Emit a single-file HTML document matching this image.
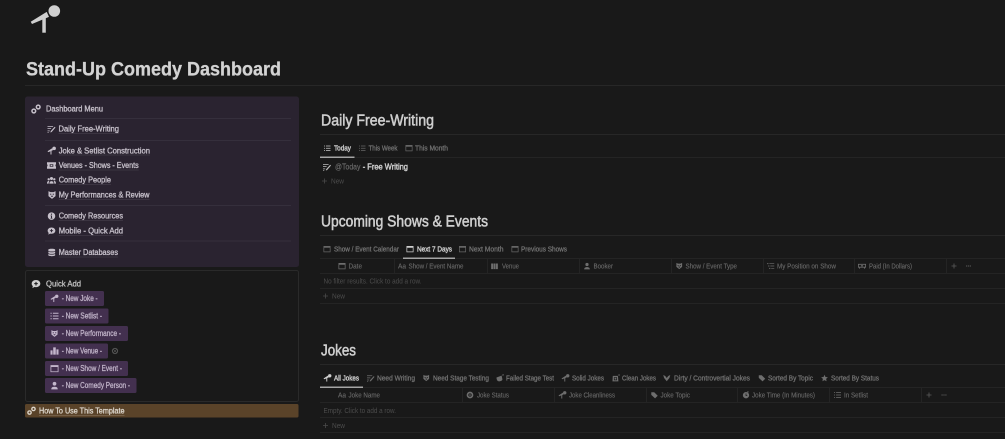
<!DOCTYPE html>
<html lang="en">
<head>
<meta charset="utf-8">
<title>Stand-Up Comedy Dashboard</title>
<style>
html,body{margin:0;padding:0;background:#191919;width:1005px;height:439px;overflow:hidden}
svg{display:block;filter:blur(.35px)}
text{font-family:"Liberation Sans",sans-serif;font-size:7.4px}
.m{fill:#c6c0ca;stroke:#c6c0ca;stroke-width:.32px;font-size:8px}
.b{fill:#c3b6cb;stroke:#c3b6cb;stroke-width:.26px;font-size:7.8px}
.h{fill:#cfcfcf;stroke:#cfcfcf;stroke-width:.5px;font-size:15.5px}
.t{fill:#747474;stroke:#747474;stroke-width:.26px;font-size:7.7px}
.a{fill:#cdcdcd;stroke:#cdcdcd;stroke-width:.38px;font-size:7.7px}
.c{fill:#6c6c6c;stroke:#6c6c6c;stroke-width:.1px;font-size:7.7px}
.f{fill:#4c4c4c;font-size:7.6px}
.l{stroke:#272727;stroke-width:1}
.s{stroke:#242424;stroke-width:1}
.u{stroke:#4c4653;stroke-width:.6}
</style>
</head>
<body>
<svg width="1005" height="439" viewBox="0 0 1005 439" xmlns="http://www.w3.org/2000/svg">
<defs>
<symbol id="mic" viewBox="0 0 10 10"><circle cx="7.8" cy="2.2" r="2.1"/><path d="M0 5.600 5.500 2 6.600 4.200 1 6.600z"/><rect x="3.500" y="4.400" width="1.200" height="5"/></symbol>
<symbol id="list" viewBox="0 0 10 10"><path d="M0 1h1.500v1.200H0zM3 1h7v1.200H3zM0 4.400h1.500v1.200H0zM3 4.400h7v1.200H3zM0 7.800h1.500V9H0zM3 7.800h7V9H3z"/></symbol>
<symbol id="cal" viewBox="0 0 10 10"><path fill-rule="evenodd" d="M0 .8h10v8.800H0zM1 3.200v5.400h8V3.200z"/></symbol>
<symbol id="gear" viewBox="0 0 10 10"><path fill-rule="evenodd" d="M2.800 4.400a2.600 2.600 0 1 1 0 5.200 2.600 2.600 0 0 1 0-5.200zm0 1.500a1.100 1.100 0 1 0 0 2.200 1.100 1.100 0 0 0 0-2.200zM7.200.4a2.600 2.600 0 1 1 0 5.200 2.600 2.600 0 0 1 0-5.200zm0 1.500a1.100 1.100 0 1 0 0 2.200 1.100 1.100 0 0 0 0-2.200z"/></symbol>
<symbol id="note" viewBox="0 0 10 10"><path d="M0 1.200h7v1H0zM0 4h4.500v1H0zM0 6.800h2.800v1H0zM0 8.800h1.600v.8H0zM9 2.200 10 3.200 5.200 8.800 3.600 9.400 4 7.600z"/></symbol>
<symbol id="mask" viewBox="0 0 10 10"><path fill-rule="evenodd" d="M.6.200 3 1.400h4L9.400.2v6.200L5 9.800.6 6.400zM2.400 3.400v1.200h1.800V3.400zM5.800 3.400v1.200h1.800V3.400zM3.200 6h3.600L5 7.800z"/></symbol>
<symbol id="people" viewBox="0 0 10 10"><circle cx="5" cy="3.400" r="1.700"/><circle cx="1.900" cy="4.200" r="1.300"/><circle cx="8.100" cy="4.200" r="1.300"/><path d="M2.600 9c0-3.600 4.800-3.600 4.800 0zM0 9c0-3 2-3.200 2.600-2.600-.5.600-.7 1.600-.7 2.600zM10 9c0-3-2-3.200-2.600-2.600.5.600.7 1.600.7 2.600z"/></symbol>
<symbol id="person" viewBox="0 0 10 10"><circle cx="5" cy="2.800" r="2.300"/><path d="M1 9.800c0-1.400.4-3.200 4-3.200s4 1.800 4 3.200z"/></symbol>
<symbol id="ticket" viewBox="0 0 10 10"><path fill-rule="evenodd" d="M0 1.400h10v2.200c-.8.300-.8 2.300 0 2.600v2.400H0V6.200c.8-.3.800-2.300 0-2.600zM3 3.600v2.800h4V3.600z"/><rect x="4" y="4.300" width="2" height="1.400"/></symbol>
<symbol id="info" viewBox="0 0 10 10"><path fill-rule="evenodd" d="M5 .4a4.700 4.700 0 1 1 0 9.400A4.700 4.700 0 0 1 5 .4zM4.300 2v1.500h1.400V2zM3.900 4.300v1h.5v2h-.5v1h2.200v-1h-.5v-3z"/></symbol>
<symbol id="chat" viewBox="0 0 10 10"><path fill-rule="evenodd" d="M5 .6c2.800 0 4.800 1.800 4.800 4S7.800 8.500 5 8.500c-.6 0-1.200-.1-1.700-.2L1 9.600l.5-2.300C.6 6.600.2 5.700.2 4.600.2 2.400 2.200.6 5 .6zM4.400 2.600v1.400H3v1.200h1.400v1.400h1.200V5.200H7V4H5.600V2.600z"/></symbol>
<symbol id="db" viewBox="0 0 10 10"><path d="M1 1.600C1 .2 9 .2 9 1.600v1.300C9 4.200 1 4.200 1 2.900zM1 4c1.500 1 6.500 1 8 0v1.600C9 7 1 7 1 5.600zM1 6.700c1.500 1 6.500 1 8 0v1.600c0 1.400-8 1.400-8 0z"/></symbol>
<symbol id="venue" viewBox="0 0 10 10"><path d="M.2 1.500h2.800v8H.2zM3.600 1.500h2.800v8H3.600zM7 1.500h2.800v8H7z"/></symbol>
<symbol id="building" viewBox="0 0 10 10"><path d="M0 4.200h2.600V9.600H0zM3.400.4h3.200v9.200H3.400zM7.400 3h2.600v6.600H7.400z"/></symbol>
<symbol id="tag" viewBox="0 0 10 10"><path d="M.4 1h4.200l5 5-3.800 3.800-5.400-5z"/></symbol>
<symbol id="star" viewBox="0 0 10 10"><path d="M5 .4 6.400 3.600 9.800 4 7.300 6.300 8 9.700 5 8 2 9.700 2.700 6.300.2 4 3.600 3.600z"/></symbol>
<symbol id="heart" viewBox="0 0 10 10"><path d="M.3 1 3 2.400 5 5l2-2.600L9.700 1 8.500 5 5 9.400 1.500 5z"/></symbol>
<symbol id="mug" viewBox="0 0 10 10"><path d="M.6 4.400 7 2l1 4.600c0 1.600-2 2.600-4 2.600S.8 7.800.6 4.400zM7.800 .8l1.600-.6.400 1.400-1.600.6z"/></symbol>
<symbol id="clean" viewBox="0 0 10 10"><path fill-rule="evenodd" d="M1 2.400h6.400l.6 6.800H.6zM2.400 4v3.800h3.800V4z"/><circle cx="8.800" cy="1.300" r=".9"/><circle cx="4.300" cy="5.900" r="1.200"/></symbol>
<symbol id="clock" viewBox="0 0 10 10"><path fill-rule="evenodd" d="M5 .8a4.500 4.500 0 1 1 0 9 4.500 4.500 0 0 1 0-9zM4.500 2.800v3.400h2.300v-1H5.500V2.800zM6.500 0h2.400v1.200H6.500z"/></symbol>
<symbol id="status" viewBox="0 0 10 10"><path fill-rule="evenodd" d="M5 .2a4.800 4.800 0 1 1 0 9.600A4.800 4.800 0 0 1 5 .2zm0 2.400a2.400 2.400 0 1 0 0 4.800 2.400 2.400 0 0 0 0-4.800z"/><circle cx="5" cy="5" r="1.100"/></symbol>
<symbol id="money" viewBox="0 0 10 10"><path fill-rule="evenodd" d="M0 2.400h10V7H8.600v1.400h-1V7h-5.200v1.400h-1V7H0zM1 3.400v2.600h8V3.400zM3.800 4h2.400v1.400H3.800z"/></symbol>
<symbol id="pos" viewBox="0 0 10 10"><path d="M0 .8h1.600v1.600H0zM3 1h7v1H3zM1.400 4.200H3v1.600H1.400zM4.400 4.500H10v1H4.400zM2.800 7.600h1.600v1.600H2.800zM5.600 8H10v1H5.600z"/></symbol>
</defs>

<rect width="1005" height="439" fill="#191919"/>

<!-- page header -->
<g fill="#cfcfcf"><circle cx="54.300" cy="11" r="5.800"/><path d="M30.700 21.700 46.700 11.900 49 16.900 32 24z"/><rect x="42.300" y="18" width="3.500" height="14.700"/></g>
<text x="26" y="75.500" style="font-size:19.500px;font-weight:bold;fill:#d3d3d3;stroke:#d3d3d3;stroke-width:.3px" textLength="255" lengthAdjust="spacingAndGlyphs">Stand-Up Comedy Dashboard</text>
<line class="l" x1="25" y1="85.500" x2="1005" y2="85.500"/>

<!-- menu panel -->
<rect x="25" y="96.500" width="274" height="170.500" rx="2.500" fill="#2a2330"/>
<g stroke="#3a3440" stroke-width=".8"><line x1="45" y1="118.500" x2="291" y2="118.500"/><line x1="45" y1="140.500" x2="291" y2="140.500"/><line x1="45" y1="205.500" x2="291" y2="205.500"/><line x1="45" y1="241" x2="291" y2="241"/></g>
<g fill="#c6c0ca">
<use href="#gear" x="31" y="104" width="10" height="10"/>
<use href="#note" x="47" y="125" width="9" height="8"/>
<use href="#mic" x="47.500" y="146.500" width="8.500" height="8.500"/>
<use href="#ticket" x="47" y="161" width="9" height="9"/>
<use href="#people" x="46.500" y="175.500" width="10" height="9"/>
<use href="#mask" x="48" y="190.500" width="8" height="9"/>
<use href="#info" x="47.500" y="212" width="8" height="8"/>
<use href="#chat" x="47.500" y="227" width="8" height="8"/>
<use href="#db" x="47.500" y="248" width="8.500" height="9"/>
</g>
<text class="m" x="46" y="111.700" textLength="57" lengthAdjust="spacingAndGlyphs">Dashboard Menu</text>
<text class="m" x="58.500" y="131.700" textLength="60.500" lengthAdjust="spacingAndGlyphs">Daily Free-Writing</text>
<text class="m" x="58.700" y="153.300" textLength="91.300" lengthAdjust="spacingAndGlyphs">Joke &amp; Setlist Construction</text>
<text class="m" x="58.700" y="168" textLength="80" lengthAdjust="spacingAndGlyphs">Venues - Shows - Events</text>
<text class="m" x="58.700" y="182.700" textLength="52.300" lengthAdjust="spacingAndGlyphs">Comedy People</text>
<text class="m" x="58.700" y="197.500" textLength="90.800" lengthAdjust="spacingAndGlyphs">My Performances &amp; Review</text>
<text class="m" x="58.700" y="218.700" textLength="64.300" lengthAdjust="spacingAndGlyphs">Comedy Resources</text>
<text class="m" x="58.700" y="233.500" textLength="64.300" lengthAdjust="spacingAndGlyphs">Mobile - Quick Add</text>
<text class="m" x="58.700" y="255" textLength="59.300" lengthAdjust="spacingAndGlyphs">Master Databases</text>
<g class="u">
<line x1="58.500" y1="133.500" x2="119" y2="133.500"/><line x1="58.700" y1="155" x2="150" y2="155"/><line x1="58.700" y1="170" x2="138.700" y2="170"/><line x1="58.700" y1="184.500" x2="111" y2="184.500"/><line x1="58.700" y1="199.500" x2="149.500" y2="199.500"/><line x1="58.700" y1="220.500" x2="123" y2="220.500"/><line x1="58.700" y1="235.500" x2="123" y2="235.500"/><line x1="58.700" y1="257" x2="118" y2="257"/>
</g>

<!-- quick add -->
<rect x="25.500" y="270.500" width="273" height="131" rx="2" fill="#191919" stroke="#2a2a2a"/>
<use href="#chat" x="31.500" y="279.500" width="9" height="9" fill="#cfcfcf"/>
<text class="m" x="46" y="286.500" textLength="35" lengthAdjust="spacingAndGlyphs" style="fill:#bdbdbd;stroke:#bdbdbd">Quick Add</text>
<g fill="#43304f">
<rect x="45" y="291" width="59" height="15" rx="1.500"/>
<rect x="45" y="308.500" width="63.500" height="15" rx="1.500"/>
<rect x="45" y="326" width="83" height="15" rx="1.500"/>
<rect x="45" y="343.500" width="63" height="15" rx="1.500"/>
<rect x="45" y="361" width="83" height="15" rx="1.500"/>
<rect x="45" y="378" width="91.500" height="15" rx="1.500"/>
</g>
<g fill="#c3b6cb">
<use href="#mic" x="50.500" y="294.500" width="8" height="8"/>
<use href="#list" x="50.500" y="312" width="8" height="8"/>
<use href="#mask" x="51" y="329" width="7" height="9"/>
<use href="#building" x="50.500" y="347" width="8" height="8"/>
<use href="#cal" x="50.500" y="364.500" width="8" height="8"/>
<use href="#person" x="50.500" y="381.500" width="8" height="8"/>
</g>
<text class="b" x="61.700" y="301" textLength="36" lengthAdjust="spacingAndGlyphs">- New Joke -</text>
<text class="b" x="61.700" y="318.500" textLength="40.300" lengthAdjust="spacingAndGlyphs">- New Setlist -</text>
<text class="b" x="61.700" y="336" textLength="59.300" lengthAdjust="spacingAndGlyphs">- New Performance -</text>
<text class="b" x="61.700" y="353.500" textLength="40.300" lengthAdjust="spacingAndGlyphs">- New Venue -</text>
<text class="b" x="61.700" y="371" textLength="60.300" lengthAdjust="spacingAndGlyphs">- New Show / Event -</text>
<text class="b" x="61.700" y="388" textLength="68.300" lengthAdjust="spacingAndGlyphs">- New Comedy Person -</text>
<circle cx="115" cy="351" r="2.600" fill="none" stroke="#555" stroke-width="1"/>
<path d="M113.500 349.500 116.500 352.500M116.500 349.500 113.500 352.500" stroke="#555" stroke-width=".7"/>

<rect x="25" y="404" width="273.500" height="13.500" rx="1.500" fill="#5a4329"/>
<use href="#gear" x="27" y="406" width="9" height="9.500" fill="#ddd6cc"/>
<text class="m" x="39" y="413.500" textLength="85.500" lengthAdjust="spacingAndGlyphs" style="fill:#dcd6cc;stroke:#dcd6cc">How To Use This Template</text>
<line x1="39" y1="415.500" x2="124.500" y2="415.500" stroke="#8d7c66" stroke-width=".5"/>

<!-- Daily Free-Writing -->
<text class="h" x="321" y="125.300" textLength="113" lengthAdjust="spacingAndGlyphs">Daily Free-Writing</text>
<line class="l" x1="320" y1="134.500" x2="1005" y2="134.500"/>
<line class="s" x1="320" y1="157.500" x2="1005" y2="157.500"/>
<rect x="320" y="156.500" width="34.500" height="1.500" fill="#a5a5a5"/>
<use href="#list" x="324" y="145" width="6.500" height="6.500" fill="#c9c9c9"/>
<use href="#list" x="359" y="145" width="6.500" height="6.500" fill="#666"/>
<use href="#cal" x="405.500" y="144.500" width="7" height="7" fill="#666"/>
<text class="a" x="334" y="150.500" textLength="17" lengthAdjust="spacingAndGlyphs">Today</text>
<text class="t" x="368.500" y="150.500" textLength="29" lengthAdjust="spacingAndGlyphs">This Week</text>
<text class="t" x="415" y="150.500" textLength="33" lengthAdjust="spacingAndGlyphs">This Month</text>
<use href="#note" x="322.500" y="163" width="9" height="8" fill="#bdbdbd"/>
<text x="335" y="169.500" textLength="25.500" lengthAdjust="spacingAndGlyphs" style="fill:#6a6a6a;font-size:7.800px;stroke:#6a6a6a;stroke-width:.15px">@Today</text>
<text x="362.700" y="169.500" textLength="45.300" lengthAdjust="spacingAndGlyphs" style="fill:#cfcfcf;font-size:7.800px;stroke:#cfcfcf;stroke-width:.4px">- Free Writing</text>
<path d="M322 181h5M324.500 178.500v5" stroke="#4a4a4a" stroke-width=".8"/>
<text class="f" x="331" y="183.500" textLength="13" lengthAdjust="spacingAndGlyphs">New</text>

<!-- Upcoming -->
<text class="h" x="321" y="226.300" textLength="167" lengthAdjust="spacingAndGlyphs">Upcoming Shows &amp; Events</text>
<line class="l" x1="320" y1="235.500" x2="1005" y2="235.500"/>
<g fill="#666">
<use href="#cal" x="323.500" y="245.500" width="7" height="7"/>
<use href="#cal" x="459" y="245.500" width="7" height="7"/>
<use href="#cal" x="511.500" y="245.500" width="7" height="7"/>
</g>
<use href="#cal" x="406.500" y="245.500" width="7" height="7" fill="#cfcfcf"/>
<text class="t" x="334" y="251.500" textLength="65" lengthAdjust="spacingAndGlyphs">Show / Event Calendar</text>
<text class="a" x="417" y="251.500" textLength="35" lengthAdjust="spacingAndGlyphs">Next 7 Days</text>
<text class="t" x="469" y="251.500" textLength="34.500" lengthAdjust="spacingAndGlyphs">Next Month</text>
<text class="t" x="521" y="251.500" textLength="46" lengthAdjust="spacingAndGlyphs">Previous Shows</text>
<g class="s"><line x1="320" y1="258.500" x2="1005" y2="258.500"/><line x1="320" y1="273.500" x2="1005" y2="273.500"/><line x1="320" y1="288.500" x2="1005" y2="288.500"/><line x1="320" y1="303.500" x2="1005" y2="303.500"/>
<line x1="394.500" y1="258.500" x2="394.500" y2="273.500"/><line x1="487.500" y1="258.500" x2="487.500" y2="273.500"/><line x1="579.500" y1="258.500" x2="579.500" y2="273.500"/><line x1="671.500" y1="258.500" x2="671.500" y2="273.500"/><line x1="763.500" y1="258.500" x2="763.500" y2="273.500"/><line x1="854.500" y1="258.500" x2="854.500" y2="273.500"/><line x1="946.500" y1="258.500" x2="946.500" y2="273.500"/></g>
<rect x="403" y="257.500" width="52" height="1.500" fill="#a5a5a5"/>
<g fill="#6e6e6e">
<use href="#cal" x="338.500" y="262.500" width="7" height="7"/>
<use href="#venue" x="491" y="262.500" width="7" height="7"/>
<use href="#person" x="583.500" y="262.500" width="7" height="7"/>
<use href="#mask" x="676" y="262" width="6.500" height="8"/>
<use href="#pos" x="767" y="262.500" width="7.500" height="7"/>
<use href="#money" x="858" y="262" width="8" height="8"/>
</g>
<text class="c" x="398" y="268.500" textLength="8" lengthAdjust="spacingAndGlyphs">Aa</text>
<text class="c" x="348.500" y="268.500" textLength="13.500" lengthAdjust="spacingAndGlyphs">Date</text>
<text class="c" x="408.500" y="268.500" textLength="55" lengthAdjust="spacingAndGlyphs">Show / Event Name</text>
<text class="c" x="502" y="268.500" textLength="17" lengthAdjust="spacingAndGlyphs">Venue</text>
<text class="c" x="593.500" y="268.500" textLength="19.500" lengthAdjust="spacingAndGlyphs">Booker</text>
<text class="c" x="685.500" y="268.500" textLength="51.500" lengthAdjust="spacingAndGlyphs">Show / Event Type</text>
<text class="c" x="777" y="268.500" textLength="59" lengthAdjust="spacingAndGlyphs">My Position on Show</text>
<text class="c" x="869" y="268.500" textLength="43" lengthAdjust="spacingAndGlyphs">Paid (In Dollars)</text>
<path d="M951.500 266h5M954 263.500v5" stroke="#5c5c5c" stroke-width=".8"/>
<path d="M966 266h5" stroke="#5c5c5c" stroke-width="1" stroke-dasharray="1.200 .7"/>
<text class="f" x="323.500" y="283.500" textLength="98" lengthAdjust="spacingAndGlyphs">No filter results. Click to add a row.</text>
<path d="M323 296h5M325.500 293.500v5" stroke="#4a4a4a" stroke-width=".8"/>
<text class="f" x="332" y="298.500" textLength="13" lengthAdjust="spacingAndGlyphs">New</text>

<!-- Jokes -->
<text class="h" x="321" y="355.300" textLength="35" lengthAdjust="spacingAndGlyphs">Jokes</text>
<line class="l" x1="320" y1="364.500" x2="1005" y2="364.500"/>
<use href="#mic" x="323.500" y="374" width="8" height="8" fill="#cfcfcf"/>
<g fill="#6e6e6e">
<use href="#note" x="366.500" y="374.500" width="8.500" height="7.500"/>
<use href="#mask" x="423" y="374" width="6.500" height="8"/>
<use href="#mug" x="496" y="374" width="8" height="8"/>
<use href="#mic" x="561.500" y="374" width="8" height="8"/>
<use href="#clean" x="612" y="374" width="8" height="8"/>
<use href="#heart" x="663" y="374" width="7.500" height="8"/>
<use href="#tag" x="758.500" y="374.500" width="7" height="7"/>
<use href="#star" x="821" y="374.500" width="7" height="7"/>
</g>
<text class="a" x="334" y="380.500" textLength="25" lengthAdjust="spacingAndGlyphs">All Jokes</text>
<text class="t" x="377" y="380.500" textLength="38" lengthAdjust="spacingAndGlyphs">Need Writing</text>
<text class="t" x="433" y="380.500" textLength="56" lengthAdjust="spacingAndGlyphs">Need Stage Testing</text>
<text class="t" x="506" y="380.500" textLength="48" lengthAdjust="spacingAndGlyphs">Failed Stage Test</text>
<text class="t" x="572" y="380.500" textLength="32" lengthAdjust="spacingAndGlyphs">Solid Jokes</text>
<text class="t" x="622" y="380.500" textLength="34" lengthAdjust="spacingAndGlyphs">Clean Jokes</text>
<text class="t" x="674" y="380.500" textLength="76" lengthAdjust="spacingAndGlyphs">Dirty / Controvertial Jokes</text>
<text class="t" x="768" y="380.500" textLength="45" lengthAdjust="spacingAndGlyphs">Sorted By Topic</text>
<text class="t" x="831" y="380.500" textLength="48" lengthAdjust="spacingAndGlyphs">Sorted By Status</text>
<g class="s"><line x1="320" y1="387.500" x2="1005" y2="387.500"/><line x1="320" y1="402.500" x2="1005" y2="402.500"/><line x1="320" y1="417.500" x2="1005" y2="417.500"/><line x1="320" y1="432.500" x2="1005" y2="432.500"/>
<line x1="462.500" y1="387.500" x2="462.500" y2="402.500"/><line x1="554.500" y1="387.500" x2="554.500" y2="402.500"/><line x1="646.500" y1="387.500" x2="646.500" y2="402.500"/><line x1="737.500" y1="387.500" x2="737.500" y2="402.500"/><line x1="829.500" y1="387.500" x2="829.500" y2="402.500"/><line x1="921.500" y1="387.500" x2="921.500" y2="402.500"/></g>
<rect x="320" y="386.500" width="43" height="1.500" fill="#a5a5a5"/>
<g fill="#6e6e6e">
<use href="#status" x="466.500" y="391.500" width="7" height="7"/>
<use href="#mic" x="558.500" y="391" width="8" height="8"/>
<use href="#tag" x="651" y="391.500" width="7" height="7"/>
<use href="#clock" x="742.500" y="391" width="7" height="8"/>
<use href="#list" x="834" y="391.500" width="7" height="7"/>
</g>
<text class="c" x="338" y="397.500" textLength="8" lengthAdjust="spacingAndGlyphs">Aa</text>
<text class="c" x="348.500" y="397.500" textLength="31.500" lengthAdjust="spacingAndGlyphs">Joke Name</text>
<text class="c" x="477" y="397.500" textLength="32" lengthAdjust="spacingAndGlyphs">Joke Status</text>
<text class="c" x="569" y="397.500" textLength="46" lengthAdjust="spacingAndGlyphs">Joke Cleanliness</text>
<text class="c" x="660.500" y="397.500" textLength="29.500" lengthAdjust="spacingAndGlyphs">Joke Topic</text>
<text class="c" x="752" y="397.500" textLength="63" lengthAdjust="spacingAndGlyphs">Joke Time (In Minutes)</text>
<text class="c" x="844" y="397.500" textLength="24" lengthAdjust="spacingAndGlyphs">In Setlist</text>
<path d="M926.500 395h5M929 392.500v5" stroke="#5c5c5c" stroke-width=".8"/>
<path d="M941.500 395h5" stroke="#5c5c5c" stroke-width="1" stroke-dasharray="1.200 .7"/>
<text class="f" x="323.500" y="413" textLength="72.500" lengthAdjust="spacingAndGlyphs">Empty. Click to add a row.</text>
<path d="M323 425.500h5M325.500 423v5" stroke="#4a4a4a" stroke-width=".8"/>
<text class="f" x="332" y="428" textLength="13" lengthAdjust="spacingAndGlyphs">New</text>
</svg>
</body>
</html>
